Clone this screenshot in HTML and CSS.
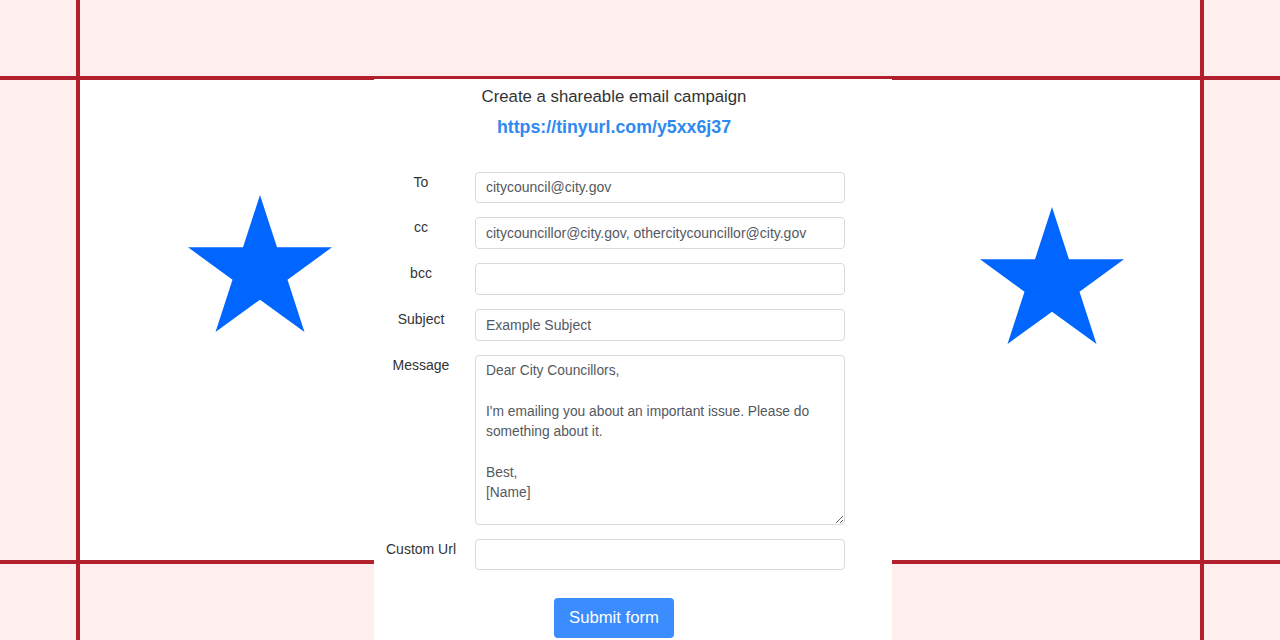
FILE: index.html
```html
<!DOCTYPE html>
<html lang="en">
<head>
<meta charset="utf-8">
<title>Create a shareable email campaign</title>
<link rel="stylesheet" href="styles.css">
</head>
<body>
<div class="board">
  <svg class="star star-left" viewBox="-95.11 -100 190.22 180.9" width="144" height="137" aria-hidden="true">
    <polygon points="0,-100 22.45,-30.9 95.11,-30.9 36.33,11.8 58.78,80.9 0,38.2 -58.78,80.9 -36.33,11.8 -95.11,-30.9 -22.45,-30.9"/>
  </svg>
  <main class="panel">
    <div class="panel-inner">
      <h1 class="title">Create a shareable email campaign</h1>
      <a class="short-link" href="#">https://tinyurl.com/y5xx6j37</a>
      <form class="form">
        <label class="label" for="to">To</label>
        <input class="field" id="to" type="text" value="citycouncil@city.gov">
        <label class="label" for="cc">cc</label>
        <input class="field" id="cc" type="text" value="citycouncillor@city.gov, othercitycouncillor@city.gov">
        <label class="label" for="bcc">bcc</label>
        <input class="field" id="bcc" type="text" value="">
        <label class="label" for="subject">Subject</label>
        <input class="field" id="subject" type="text" value="Example Subject">
        <label class="label" for="message">Message</label>
        <textarea class="field field-area" id="message">Dear City Councillors,

I'm emailing you about an important issue. Please do something about it.

Best,
[Name]</textarea>
        <label class="label" for="url">Custom Url</label>
        <input class="field" id="url" type="text" value="">
        <div class="actions">
          <button class="submit" type="button">Submit form</button>
        </div>
      </form>
    </div>
  </main>
  <svg class="star star-right" viewBox="-95.11 -100 190.22 180.9" width="144" height="137" aria-hidden="true">
    <polygon points="0,-100 22.45,-30.9 95.11,-30.9 36.33,11.8 58.78,80.9 0,38.2 -58.78,80.9 -36.33,11.8 -95.11,-30.9 -22.45,-30.9"/>
  </svg>
</div>
</body>
</html>
```

FILE: styles.css
```css
html, body {
  margin: 0;
  padding: 0;
  height: 640px;
  overflow: hidden;
}

body {
  font-family: "Liberation Sans", Arial, sans-serif;
  color: #333;
  background:
    linear-gradient(#b21f2d, #b21f2d) 76px 0 / 4px 100% no-repeat,
    linear-gradient(#b21f2d, #b21f2d) 1200px 0 / 4px 100% no-repeat,
    linear-gradient(#b21f2d, #b21f2d) 0 76px / 100% 4px no-repeat,
    linear-gradient(#b21f2d, #b21f2d) 0 560px / 100% 4px no-repeat,
    #feeeee;
}

.board {
  margin: 80px 0 0 80px;
  width: 1120px;
  height: 480px;
  background: #fff;
  display: flex;
  align-items: flex-start;
}

.star {
  flex: none;
  fill: #0066ff;
}

.star-left {
  margin: 115px 0 0 108px;
}

.star-right {
  margin: 127px 0 0 88px;
}

.panel {
  flex: none;
  margin: -1px 0 0 42px;
  width: 518px;
  height: 600px;
  background: #fff;
}

.panel-inner {
  width: 480px;
  padding-top: 7px;
  display: flex;
  flex-direction: column;
  align-items: center;
}

.title {
  margin: 0;
  font-size: 16.8px;
  line-height: 22px;
  font-weight: normal;
  color: #333;
}

.short-link {
  margin-top: 8px;
  font-size: 17.8px;
  line-height: 22px;
  font-weight: bold;
  color: #2e89f0;
  text-decoration: none;
}

.form {
  margin-top: 33.5px;
  align-self: stretch;
  display: grid;
  grid-template-columns: 94px 370px;
  column-gap: 7px;
  row-gap: 14px;
  align-items: start;
}

.label {
  font-size: 14px;
  line-height: 21px;
  text-align: center;
  color: #333;
}

.field {
  box-sizing: border-box;
  width: 370px;
  height: 31.8px;
  margin: 0;
  padding: 0 10px;
  border: 1px solid #d6d9de;
  border-radius: 4px;
  background: #fff;
  font-family: "Liberation Sans", Arial, sans-serif;
  font-size: 14px;
  color: #54595f;
  outline: none;
}

.field-area {
  height: 170px;
  padding: 5px 10px;
  font-size: 13.8px;
  line-height: 20.4px;
  resize: vertical;
}

.actions {
  grid-column: 1 / -1;
  display: flex;
  justify-content: center;
  margin-top: 14px;
  width: 480px;
}

.submit {
  width: 120px;
  height: 40px;
  border: none;
  border-radius: 4px;
  background: #3a8cff;
  color: #fff;
  font-family: "Liberation Sans", Arial, sans-serif;
  font-size: 16.7px;
  padding: 0;
}
```
